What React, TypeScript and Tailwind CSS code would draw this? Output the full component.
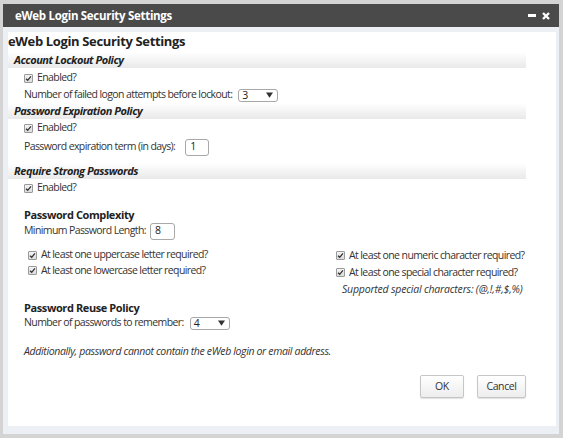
import React from "react";

const font = { fontFamily: '"Open Sans", "Noto Sans", Arial, sans-serif' };

function Check({ className = "" }: { className?: string }) {
  return (
    <span
      className={`inline-flex h-[9px] w-[9px] shrink-0 items-center justify-center rounded-[1px] border border-[#9a9a9a] bg-gradient-to-b from-[#f4f4f4] to-[#dcdcdc] ${className}`}
    >
      <svg viewBox="0 0 8 8" className="h-[7px] w-[7px]">
        <path d="M1.2 4.2 L3.1 6.1 L6.8 1.6" fill="none" stroke="#333" strokeWidth="1.5" />
      </svg>
    </span>
  );
}

function SectionBar({ title, className = "" }: { title: string; className?: string }) {
  return (
    <div
      className={`flex h-[16px] w-[518px] items-center bg-gradient-to-b from-white to-[#e9e9e9] pl-[6px] text-[11px] font-bold italic tracking-[-0.45px] text-[#222] ${className}`}
    >
      {title}
    </div>
  );
}

function Select({ value, className = "" }: { value: string; className?: string }) {
  return (
    <span
      className={`inline-flex h-[13px] w-[40px] items-center justify-between rounded-[3px] border border-[#a8a8a8] bg-white pl-[3px] pr-[4px] text-[10.5px] leading-none text-[#222] ${className}`}
    >
      {value}
      <svg viewBox="0 0 8 6" className="h-[6px] w-[7px]">
        <path d="M0 0 H8 L4 6 Z" fill="#333" />
      </svg>
    </span>
  );
}

function Field({ value, className = "" }: { value: string; className?: string }) {
  return (
    <span
      className={`inline-flex h-[17px] items-center rounded-[3px] border border-[#a8a8a8] bg-white pl-[4px] text-[10.5px] text-[#222] ${className}`}
    >
      {value}
    </span>
  );
}

function Button({ label, className = "" }: { label: string; className?: string }) {
  return (
    <button
      className={`flex h-[23px] items-center justify-center rounded-[2px] border border-[#c6c6c6] bg-gradient-to-b from-white to-[#ededed] text-[10.5px] tracking-[-0.4px] text-[#333] shadow-[0_1px_1px_rgba(0,0,0,0.12)] ${className}`}
    >
      {label}
    </button>
  );
}

export default function App() {
  return (
    <div
      className="h-[438px] w-[563px] bg-[#d4d4d4] pl-[3px] pr-[4px] pt-[4px] text-[10.5px] tracking-[-0.6px] text-[#333]"
      style={font}
    >
      <div className="flex h-[430px] w-[556px] flex-col">
        <div className="flex h-[23px] items-center justify-between bg-[#4a4a4a] pl-[12px] pr-[9px]">
          <span className="text-[11.5px] font-bold tracking-[-0.3px] text-white">
            eWeb Login Security Settings
          </span>
          <span className="flex items-center gap-[6px]">
            <span className="h-[3px] w-[8px] bg-white" />
            <svg viewBox="0 0 8 8" className="h-[8px] w-[8px]">
              <path d="M1 1 L7 7 M7 1 L1 7" stroke="white" strokeWidth="2.4" />
            </svg>
          </span>
        </div>

        <div className="flex-1 bg-[#eceff4] pb-[8px] pl-[5px] pr-[3px] pt-[5px]">
          <div className="flex h-full flex-col bg-white">
            <div className="flex h-[20px] items-center text-[13px] font-bold tracking-[-0.35px] text-[#222]">
              eWeb Login Security Settings
            </div>

            <SectionBar title="Account Lockout Policy" />
            <div className="mt-[2px] flex h-[16px] items-center pl-[16px]">
              <Check />
              <span className="ml-[4px]">Enabled?</span>
            </div>
            <div className="mt-[1px] flex h-[16px] items-center pl-[16px]">
              <span>Number of failed logon attempts before lockout:</span>
              <Select value="3" className="ml-[6px]" />
            </div>

            <SectionBar title="Password Expiration Policy" />
            <div className="mt-[1px] flex h-[16px] items-center pl-[16px]">
              <Check />
              <span className="ml-[4px]">Enabled?</span>
            </div>
            <div className="mt-[2px] flex h-[18px] items-center pl-[16px]">
              <span>Password expiration term (in days):</span>
              <Field value="1" className="ml-[10px] w-[24px]" />
            </div>

            <SectionBar title="Require Strong Passwords" className="mt-[7px]" />
            <div className="mt-[1px] flex h-[16px] items-center pl-[16px]">
              <Check />
              <span className="ml-[4px]">Enabled?</span>
            </div>

            <div className="mt-[11px] flex h-[16px] items-center pl-[16px] text-[11px] font-bold tracking-[-0.4px] text-[#222]">
              Password Complexity
            </div>
            <div className="flex h-[16px] items-center pl-[16px]">
              <span>Minimum Password Length:</span>
              <Field value="8" className="ml-[4px] w-[25px]" />
            </div>

            <div className="mt-[8px] flex">
              <div className="flex w-[328px] flex-col pl-[20px]">
                <div className="flex h-[16px] items-center">
                  <Check />
                  <span className="ml-[4px]">At least one uppercase letter required?</span>
                </div>
                <div className="flex h-[15px] items-center">
                  <Check />
                  <span className="ml-[4px]">At least one lowercase letter required?</span>
                </div>
              </div>
              <div className="flex flex-col">
                <div className="flex h-[17px] items-center">
                  <Check />
                  <span className="ml-[4px]">At least one numeric character required?</span>
                </div>
                <div className="flex h-[17px] items-center">
                  <Check />
                  <span className="ml-[4px]">At least one special character required?</span>
                </div>
                <div className="flex h-[17px] items-center pl-[6px] italic tracking-[-0.2px]">
                  Supported special characters: (@,!,#,$,%)
                </div>
              </div>
            </div>

            <div className="mt-[3px] flex h-[15px] items-center pl-[16px] text-[11px] font-bold tracking-[-0.4px] text-[#222]">
              Password Reuse Policy
            </div>
            <div className="flex h-[14px] items-center pl-[16px]">
              <span>Number of passwords to remember:</span>
              <Select value="4" className="ml-[6px]" />
            </div>

            <div className="mt-[14px] flex h-[16px] items-center pl-[16px] italic tracking-[-0.35px]">
              Additionally, password cannot contain the eWeb login or email address.
            </div>

            <div className="mt-[15px] flex justify-end gap-[13px] pr-[30px]">
              <Button label="OK" className="w-[44px]" />
              <Button label="Cancel" className="w-[49px]" />
            </div>
          </div>
        </div>
      </div>
    </div>
  );
}
